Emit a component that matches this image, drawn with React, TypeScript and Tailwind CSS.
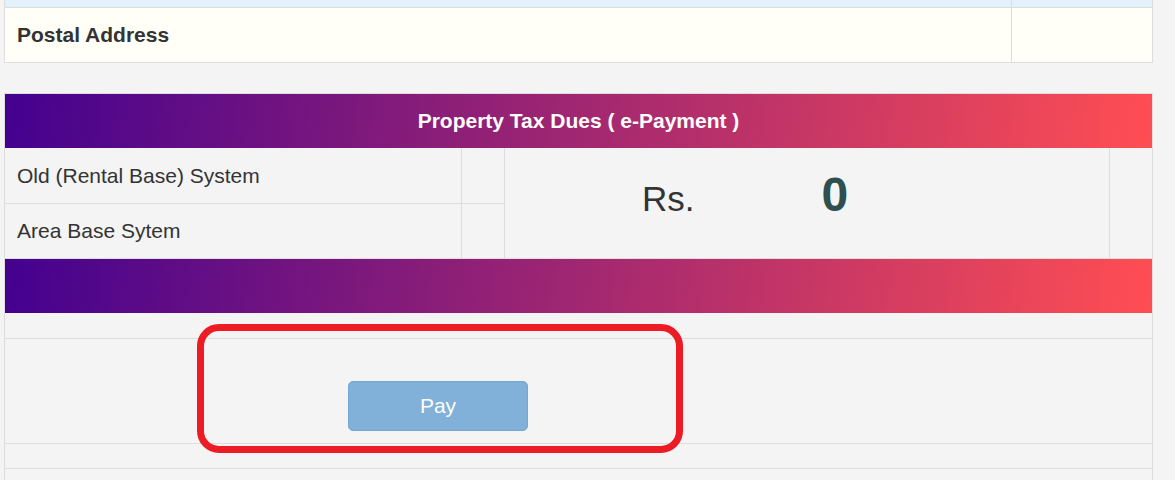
import React from 'react';

const bar = 'bg-[linear-gradient(97deg,#43018f_0%,#a12771_50%,#ff4e53_100%)]';

export default function App() {
  return (
    <div className="relative min-h-screen bg-[#f4f4f4] font-['Liberation_Sans',Arial,sans-serif] text-[#333]">
      {/* owner details (tail end) */}
      <div className="ml-[4px] w-[1149px] border-x border-[#ddd]">
        <div className="flex h-[8px] border-b border-[#ddd] bg-[#e3f1fa]">
          <div className="w-[1007px] border-r border-[#ddd]" />
        </div>
        <div className="flex h-[55px] border-b border-[#ddd] bg-[#fffff7]">
          <div className="flex w-[1007px] items-center border-r border-[#ddd] pl-[12px] text-[21px] font-bold">
            Postal Address
          </div>
          <div className="flex-1" />
        </div>
      </div>

      {/* dues */}
      <div className="ml-[4px] mt-[30px] w-[1149px] border-x border-t border-[#ddd]">
        <div className={`flex h-[54px] items-center justify-center text-[21px] font-bold text-white ${bar}`}>
          Property Tax Dues ( e-Payment )
        </div>

        <div className="flex border-b border-[#ddd]">
          <div className="flex flex-col">
            <div className="flex h-[56px] border-b border-[#ddd]">
              <div className="flex w-[457px] items-center border-r border-[#ddd] pl-[12px] text-[21px]">
                Old (Rental Base) System
              </div>
              <div className="w-[43px] border-r border-[#ddd]" />
            </div>
            <div className="flex h-[54px]">
              <div className="flex w-[457px] items-center border-r border-[#ddd] pl-[12px] text-[21px]">
                Area Base Sytem
              </div>
              <div className="w-[43px] border-r border-[#ddd]" />
            </div>
          </div>
          <div className="flex w-[605px] items-baseline border-r border-[#ddd] pl-[137px] pt-[23px]">
            <span className="text-[35px] leading-none">Rs.</span>
            <span className="ml-[127px] text-[48px] font-bold leading-none text-[#2f4f4f]">0</span>
          </div>
          <div className="flex-1" />
        </div>

        <div className={`h-[54px] ${bar}`} />

        <div className="h-[26px] border-b border-[#ddd]" />
        <div className="h-[105px] border-b border-[#ddd] pl-[343px] pt-[42px]">
          <button className="flex h-[50px] w-[180px] items-center justify-center rounded-[5px] border border-[#76a8d3] bg-[#81b0d9] text-[21px] text-white">
            Pay
          </button>
        </div>
        <div className="h-[25px] border-b border-[#ddd]" />
        <div className="h-[11px]" />
      </div>

      {/* highlight marker drawn over the pay row */}
      <div className="pointer-events-none absolute left-[197px] top-[324px] h-[129px] w-[486px] rounded-[22px] border-[7px] border-[#ed1c24]" />
    </div>
  );
}
